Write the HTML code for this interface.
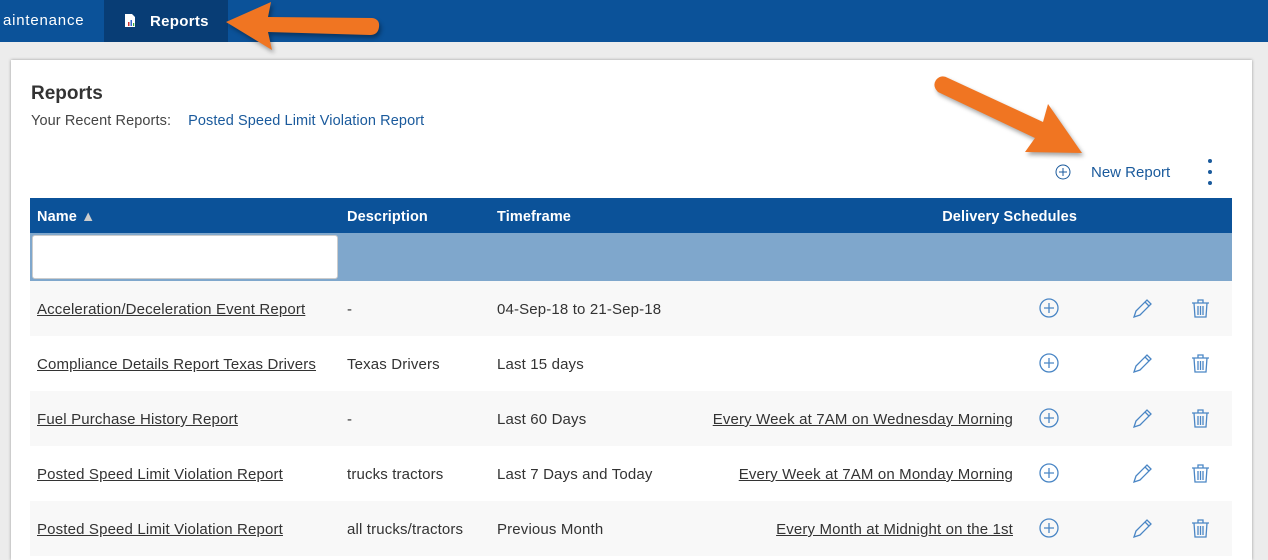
<!DOCTYPE html>
<html><head><style>
*{margin:0;padding:0;box-sizing:border-box}
body{width:1268px;height:554px;overflow:hidden;background:#ececec;font-family:"Liberation Sans",sans-serif;position:relative}
.nav{position:absolute;left:0;top:0;width:1268px;height:42px;background:#0b5299}
.nav .m{position:absolute;left:3px;top:12px;color:#fff;font-size:15px;letter-spacing:.8px}
.nav .t{position:absolute;left:104px;top:0;width:124px;height:42px;background:#083d75;color:#fff;font-weight:bold;font-size:15px}
.card{position:absolute;left:11px;top:60px;width:1241px;height:500px;background:#fff;box-shadow:0 0 3px rgba(0,0,0,.35)}
h1{position:absolute;left:31px;top:83px;font-size:19px;color:#333;font-weight:bold}
.rec{position:absolute;left:31px;top:113px;font-size:14.5px;color:#444;letter-spacing:.1px}
.rec span{color:#1a5a9c;margin-left:17px}
.nr{position:absolute;left:1091px;top:164px;font-size:15px;color:#1a5a9c;letter-spacing:0}
table{position:absolute;left:30px;top:198px;width:1202px;border-collapse:collapse;font-size:15px;color:#333;letter-spacing:.15px}
th{background:#0b5299;color:#fff;height:35px;text-align:left;font-weight:bold;padding-left:7px;font-size:14.5px;letter-spacing:.1px;padding-top:2px}
.f td{background:#7fa7cc;height:48px}
tr.r td{height:55px;padding-left:7px;padding-top:2px}
tr.r:nth-child(odd) td{background:#f8f8f8}
tr.r:nth-child(even) td{background:#fff}
a{color:#333;text-decoration:underline}
.s{text-align:right;padding-right:4px}
</style></head><body>
<div class="nav"><div class="m">aintenance</div>
<div class="t"><svg style="position:absolute;left:20px;top:13px" width="12" height="15"><path d="M1 1h7l3 3v10H1z" fill="#fff"/><rect x="4" y="9" width="1.5" height="4" fill="#c33"/><rect x="6.5" y="7" width="1.5" height="6" fill="#36c"/><rect x="9" y="10" width="1.2" height="3" fill="#3a3"/></svg><span style="position:absolute;left:46px;top:13px;letter-spacing:.3px">Reports</span></div></div>
<div class="card"></div>
<h1>Reports</h1>
<div class="rec">Your Recent Reports:<span>Posted Speed Limit Violation Report</span></div>
<svg style="position:absolute;left:1055px;top:164px" width="16" height="16"><circle cx="8" cy="8" r="7" fill="none" stroke="#1a5a9c" stroke-width="1"/><path d="M8 4v8M4 8h8" stroke="#1a5a9c"/></svg>
<div class="nr">New Report</div>
<svg style="position:absolute;left:1206px;top:157px" width="8" height="30"><circle cx="4" cy="4" r="2" fill="#1a5a9c"/><circle cx="4" cy="15" r="2" fill="#1a5a9c"/><circle cx="4" cy="26" r="2" fill="#1a5a9c"/></svg>
<table>
<tr><th style="width:310px">Name <span style="color:#ccc">▲</span></th><th style="width:150px">Description</th><th style="width:180px">Timeframe</th><th style="text-align:right;padding-right:0"><span style="position:relative;left:60px">Delivery Schedules</span></th><th style="width:70px"></th><th style="width:80px"></th><th style="width:65px"></th></tr>
<tr class="f"><td style="padding:2px"><div style="width:306px;height:44px;background:#fff;border-radius:3px;border:1px solid #ccc"></div></td><td colspan="6"></td></tr>
<tr class="r"><td><a>Acceleration/Deceleration Event Report</a></td><td>-</td><td>04-Sep-18 to 21-Sep-18</td><td class="s"></td><td></td><td></td><td></td></tr>
<tr class="r"><td><a>Compliance Details Report Texas Drivers</a></td><td>Texas Drivers</td><td>Last 15 days</td><td class="s"></td><td></td><td></td><td></td></tr>
<tr class="r"><td><a>Fuel Purchase History Report</a></td><td>-</td><td>Last 60 Days</td><td class="s"><a>Every Week at 7AM on Wednesday Morning</a></td><td></td><td></td><td></td></tr>
<tr class="r"><td><a>Posted Speed Limit Violation Report</a></td><td>trucks tractors</td><td>Last 7 Days and Today</td><td class="s"><a>Every Week at 7AM on Monday Morning</a></td><td></td><td></td><td></td></tr>
<tr class="r"><td><a>Posted Speed Limit Violation Report</a></td><td>all trucks/tractors</td><td>Previous Month</td><td class="s"><a>Every Month at Midnight on the 1st</a></td><td></td><td></td><td></td></tr>
</table>
<svg style="position:absolute;left:0;top:281px" width="1268" height="273">
<defs><g id="ic">
<circle cx="1049" cy="27" r="9" fill="none" stroke="#4a86c5" stroke-width="1.3"/><path d="M1049 22v10M1044 27h10" stroke="#4a86c5" stroke-width="1.3"/>
<path d="M1134 36l2-6 11-11 4 4-11 11z M1145 21l4 4" fill="none" stroke="#4a86c5" stroke-width="1.3"/>
<path d="M1192 22h17M1198 22v-3h5v3M1194 22l1 14h11l1-14M1198 25v9M1200.5 25v9M1203 25v9" fill="none" stroke="#4a86c5" stroke-width="1.3"/>
</g></defs>
<use href="#ic"/><use href="#ic" y="55"/><use href="#ic" y="110"/><use href="#ic" y="165"/><use href="#ic" y="220"/>
</svg>
<svg style="position:absolute;left:0;top:0" width="1268" height="200">
<g fill="#f07522" style="filter:drop-shadow(2px 3px 2px rgba(0,0,0,.35))">
<path d="M226 22 L271 2 L268 17 L372 18 Q380 19 379 27 Q378 35 370 35 L268 32 L272 50 Z"/>
<path d="M1082 153 L1025 152 L1035 138 L938 92 Q932 86 936 80 Q941 74 948 78 L1043 122 L1048 104 Z"/>
</g></svg>
</body></html>
